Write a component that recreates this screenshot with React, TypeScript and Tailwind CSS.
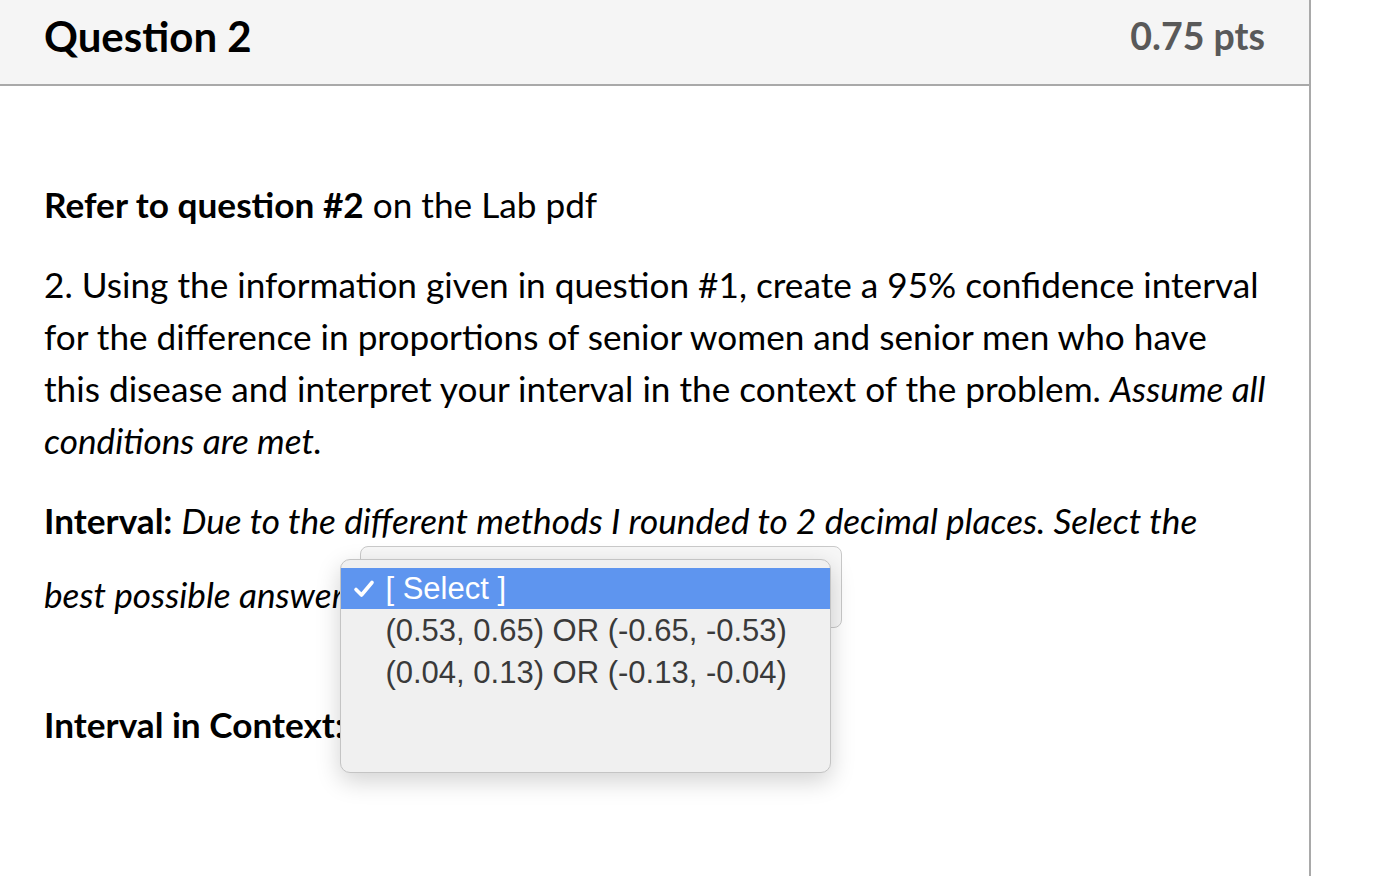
import React from "react";

export default function App() {
  return (
    <div className="w-[1390px] h-[876px] bg-white overflow-hidden text-black" style={{ fontFamily: "Lato, 'Noto Sans', sans-serif" }}>
      <div className="w-[1311px] h-full border-r-2 border-[#a9a9a9]">
        <div className="h-[86px] bg-[#f5f5f5] border-b-2 border-[#a9a9a9] flex items-center justify-between pl-[44px] pr-[44px] pb-[12px]">
          <h2 className="text-[42px] font-bold leading-none">Question 2</h2>
          <div className="text-[37.5px] font-bold leading-none text-[#595959]">0.75 pts</div>
        </div>
        <div className="px-[44px] pt-[92px] text-[35.2px] leading-[52px] whitespace-nowrap">
          <p>
            <strong>Refer to question #2</strong> on the Lab pdf
          </p>
          <p className="mt-[28px]">
            2. Using the information given in question #1, create a 95% confidence interval
            <br />
            for the difference in proportions of senior women and senior men who have
            <br />
            this disease and interpret your interval in the context of the problem. <em>Assume all</em>
            <br />
            <em>conditions are met.</em>
          </p>
          <p className="mt-[28px]">
            <strong>Interval:</strong> <em>Due to the different methods I rounded to 2 decimal places. Select the</em>
            <br />
            <em>best possible answer:</em>
            <span className="relative inline-block align-[-20px] ml-[8px] w-[482px] h-[82px] rounded-lg border border-[#c9c9c9] bg-[#f7f7f7]">
              <span className="absolute left-[-21px] top-[12px] w-[491px] h-[214px] rounded-[10px] border border-[#c4c4c4] bg-[#f0f0f0] shadow-[0_8px_24px_rgba(0,0,0,0.18)] pt-[8px]" style={{ fontFamily: "'Liberation Sans', Arial, sans-serif" }}>
                <span className="flex items-center h-[41px] bg-[#5e95ef] text-white text-[31px] leading-none">
                  <span className="w-[44px] flex justify-center pl-[1px]">
                    <svg width="22" height="20" viewBox="0 0 22 20" fill="none">
                      <path d="M3 10.5 L8.5 16 L19 3.5" stroke="white" strokeWidth="3.6" strokeLinecap="round" strokeLinejoin="round" />
                    </svg>
                  </span>
                  <span>[ Select ]</span>
                </span>
                <span className="flex items-center h-[42px] pl-[44px] text-[#3a3a3a] text-[31px] leading-none">(0.53, 0.65) OR (-0.65, -0.53)</span>
                <span className="flex items-center h-[42px] pl-[44px] text-[#3a3a3a] text-[31px] leading-none">(0.04, 0.13) OR (-0.13, -0.04)</span>
              </span>
            </span>
          </p>
          <p className="mt-[70px]">
            <strong>Interval in Context:</strong>
          </p>
        </div>
      </div>
    </div>
  );
}
